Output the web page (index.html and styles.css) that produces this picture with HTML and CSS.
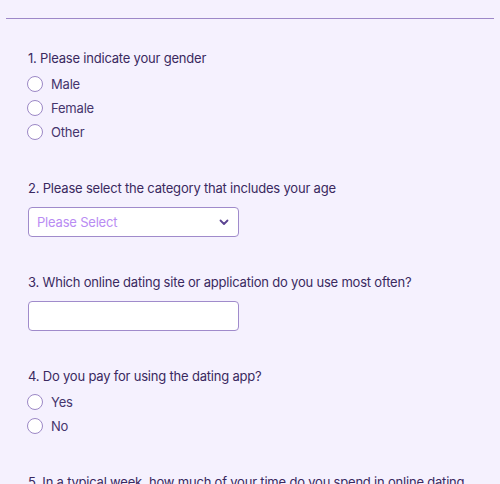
FILE: index.html
```html
<!DOCTYPE html>
<html lang="en">
<head>
  <meta charset="UTF-8">
  <meta name="viewport" content="width=device-width, initial-scale=1.0">
  <title>Online Dating Survey</title>
  <link rel="stylesheet" href="styles.css">
</head>
<body>
<hr class="divider">

<form class="survey">
  <div class="question">
    <p class="label">1. Please indicate your gender</p>
    <div class="options">
      <label class="option"><input type="radio" name="gender"><span class="circle"></span>Male</label>
      <label class="option"><input type="radio" name="gender"><span class="circle"></span>Female</label>
      <label class="option"><input type="radio" name="gender"><span class="circle"></span>Other</label>
    </div>
  </div>

  <div class="question field">
    <p class="label">2. Please select the category that includes your age</p>
    <div class="select">
      <span>Please Select</span>
      <svg width="12" height="8" viewBox="0 0 12 8"><path d="M2.5 2.5l3.5 3.5 3.5-3.5" fill="none" stroke="#5b4391" stroke-width="1.8" stroke-linecap="round" stroke-linejoin="round"/></svg>
    </div>
  </div>

  <div class="question field">
    <p class="label">3. Which online dating site or application do you use most often?</p>
    <input class="text-input" type="text">
  </div>

  <div class="question">
    <p class="label">4. Do you pay for using the dating app?</p>
    <div class="options">
      <label class="option"><input type="radio" name="pay"><span class="circle"></span>Yes</label>
      <label class="option"><input type="radio" name="pay"><span class="circle"></span>No</label>
    </div>
  </div>

  <div class="question">
    <p class="label">5. In a typical week, how much of your time do you spend in online dating applications?</p>
  </div>
</form>
</body>
</html>
```

FILE: styles.css
```css
/* Reset */
* {
  margin: 0;
  padding: 0;
  box-sizing: border-box;
}

body {
  font-family: Inter, 'Noto Sans', sans-serif;
  font-size: 13px;
  letter-spacing: -0.2px;
  color: #3a2960;
  background-color: #f5f1fe;
  overflow: hidden;
}

.divider {
  border: none;
  height: 1px;
  background: #9d88c8;
  margin: 18px 6px 0;
}

.survey {
  padding: 29px 28px 0 27px;
}

.question {
  margin-bottom: 34px;
}

.question.field {
  margin-bottom: 35px;
}

.label {
  line-height: 20px;
  padding-left: 1px;
  margin-bottom: 4px;
}

.field .label {
  margin-bottom: 9px;
}

.options {
  display: flex;
  flex-direction: column;
}

.option {
  display: flex;
  align-items: center;
  gap: 8px;
  height: 24px;
  color: #45356d;
}

.option input {
  display: none;
}

.circle {
  width: 16px;
  height: 16px;
  border: 1.5px solid #9c88c6;
  border-radius: 50%;
  background: #fff;
}

.select,
.text-input {
  display: flex;
  align-items: center;
  justify-content: space-between;
  width: 211px;
  height: 30px;
  margin-left: 1px;
  background: #fff;
  border: 1px solid #a08bcb;
  border-radius: 4px;
  padding: 0 8px;
}

.select span {
  color: #b98cf3;
}

.text-input {
  font: inherit;
  outline: none;
}
```
